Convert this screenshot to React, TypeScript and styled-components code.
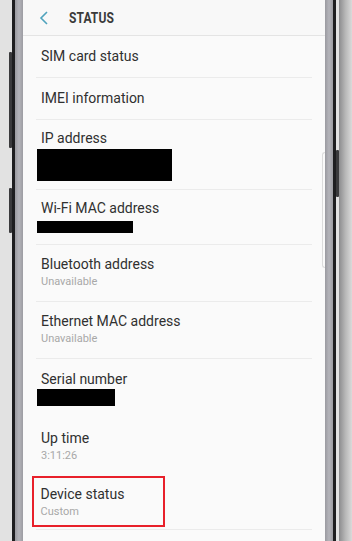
import React from 'react';
import styled, { createGlobalStyle } from 'styled-components';

const GlobalStyle = createGlobalStyle`
  html, body {
    margin: 0;
    padding: 0;
    background: #e2e2e2;
  }
  body {
    font-family: Roboto, "Noto Sans", "Liberation Sans", sans-serif;
  }
`;

const Page = styled.div`
  display: flex;
  width: 352px;
  height: 541px;
  overflow: hidden;
  background: #e2e2e2;
`;

const Gutter = styled.div`
  width: 9px;
  background: #e2e2e2;
`;

const ButtonRail = styled.div<{ width: number }>`
  width: ${p => p.width}px;
  display: flex;
  flex-direction: column;
`;

const SideButton = styled.div<{ top: number; height: number }>`
  margin-top: ${p => p.top}px;
  height: ${p => p.height}px;
  background: #3a3a3c;
  border-radius: 1px;
`;

const Bezel = styled.div`
  display: flex;
`;

const BezelEdge = styled.div`
  width: 3px;
  background: #1e1e20;
`;

const BezelBand = styled.div`
  width: 8px;
  background: linear-gradient(90deg, #9a9aa0, #b4b4ba 50%, #9c9ca2);
`;

const Shadow = styled.div`
  flex: 1;
  background: linear-gradient(90deg, #8c8c8e, #b8b8b8 50%, #dadada);
`;

const Screen = styled.div`
  width: 302px;
  background: #fafafa;
  display: flex;
  flex-direction: column;
  position: relative;
`;

const Header = styled.div`
  height: 35px;
  display: flex;
  align-items: center;
  background: #f8f8f8;
  border-bottom: 1px solid #e4e4e4;
  flex-shrink: 0;
`;

const BackButton = styled.div`
  width: 22px;
  height: 16px;
  margin-left: 16px;
  display: flex;
  align-items: center;
`;

const Title = styled.div`
  margin-left: 8px;
  font-size: 14px;
  font-weight: 700;
  color: #3a3a3a;
  letter-spacing: 0.1px;
  transform: scaleX(0.86);
  transform-origin: left center;
`;

const List = styled.div`
  display: flex;
  flex-direction: column;
  padding: 0 13px;
`;

const Item = styled.div<{ pt: number; pb: number; divider?: boolean }>`
  padding: ${p => p.pt}px 5px ${p => p.pb}px;
  border-bottom: 1px solid ${p => (p.divider === false ? 'transparent' : '#ebebeb')};
  display: flex;
  flex-direction: column;
  align-items: flex-start;
`;

const Highlight = styled.div`
  border-bottom: 1px solid #ebebeb;
`;

const HighlightBox = styled.div`
  width: 133px;
  box-sizing: border-box;
  margin-left: -4px;
  border: 2.5px solid #e8202a;
  padding: 7px 0 6px 6.5px;
  margin-bottom: 2px;
`;

const Label = styled.div`
  font-size: 14px;
  line-height: 18px;
  color: #303030;
`;

const Sub = styled.div`
  margin-top: 2px;
  font-size: 11px;
  line-height: 14px;
  color: #a8a8a8;
`;

const Redacted = styled.div<{ w: number; h: number; mt: number }>`
  width: ${p => p.w}px;
  height: ${p => p.h}px;
  margin-top: ${p => p.mt}px;
  margin-left: -4px;
  background: #000;
`;

const ScrollThumb = styled.div`
  position: absolute;
  right: 0;
  top: 152px;
  width: 2px;
  height: 114px;
  border: 1px solid #dcdcdc;
  border-right: none;
  border-radius: 3px 0 0 3px;
`;

export default function App() {
  return (
    <>
      <GlobalStyle />
      <Page>
        <Gutter />
        <ButtonRail width={3}>
          <SideButton top={52} height={96} />
          <SideButton top={40} height={45} />
        </ButtonRail>
        <Bezel>
          <BezelEdge />
          <BezelBand />
        </Bezel>
        <Screen>
          <Header>
            <BackButton>
              <svg width="10" height="14" viewBox="0 0 10 14">
                <path d="M8 1 L2 7 L8 13" fill="none" stroke="#4fa3bd" strokeWidth="1.6" />
              </svg>
            </BackButton>
            <Title>STATUS</Title>
          </Header>
          <List>
            <Item pt={11} pb={12}>
              <Label>SIM card status</Label>
            </Item>
            <Item pt={11} pb={12}>
              <Label>IMEI information</Label>
            </Item>
            <Item pt={9} pb={8}>
              <Label>IP address</Label>
              <Redacted w={135} h={32} mt={2} />
            </Item>
            <Item pt={9} pb={11}>
              <Label>Wi-Fi MAC address</Label>
              <Redacted w={96} h={12} mt={4} />
            </Item>
            <Item pt={10} pb={12}>
              <Label>Bluetooth address</Label>
              <Sub>Unavailable</Sub>
            </Item>
            <Item pt={10} pb={12}>
              <Label>Ethernet MAC address</Label>
              <Sub>Unavailable</Sub>
            </Item>
            <Item pt={11} pb={10} divider={false}>
              <Label>Serial number</Label>
              <Redacted w={78} h={17} mt={1} />
            </Item>
            <Item pt={12} pb={12} divider={false}>
              <Label>Up time</Label>
              <Sub>3:11:26</Sub>
            </Item>
            <Highlight>
              <HighlightBox>
                <Label>Device status</Label>
                <Sub>Custom</Sub>
              </HighlightBox>
            </Highlight>
          </List>
          <ScrollThumb />
        </Screen>
        <Bezel>
          <BezelBand />
          <BezelEdge />
        </Bezel>
        <ButtonRail width={3}>
          <SideButton top={150} height={47} />
        </ButtonRail>
        <Shadow />
      </Page>
    </>
  );
}
